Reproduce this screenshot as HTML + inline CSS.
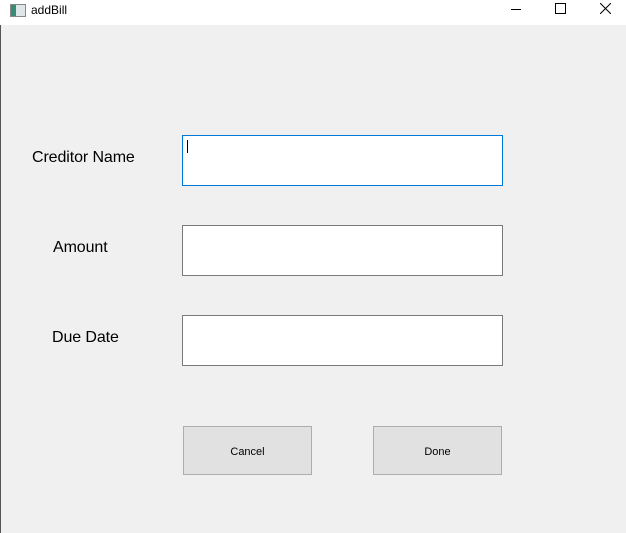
<!DOCTYPE html><html><head><style>
body{margin:0;width:626px;height:533px;background:#f0f0f0;position:relative;overflow:hidden;font-family:"Liberation Sans",sans-serif}
.t{position:absolute;left:0;top:0;width:626px;height:25px;background:#fff}
.a{position:absolute}
.in{position:absolute;left:182px;width:319px;height:49px;background:#fff;border:1px solid #7a7a7a}
.lb{position:absolute;font-size:16px;color:#000;letter-spacing:-0.1px}
.b{position:absolute;top:426px;width:127px;height:47px;background:#e1e1e1;border:1px solid #adadad;font-size:11px;display:flex;align-items:center;justify-content:center}
</style></head><body>
<div class="t"></div>
<div class="a" style="left:0;top:25px;width:1px;height:508px;background:#555"></div>
<div class="a" style="left:10px;top:4px;width:14px;height:11px;border:1px solid #888;background:linear-gradient(90deg,#3a8a78 0 5px,#dfe6ea 5px)"></div>
<div class="a" style="left:31px;top:3px;font-size:12px">addBill</div>
<div class="a" style="left:511px;top:9px;width:10px;height:1px;background:#000"></div>
<div class="a" style="left:555px;top:3px;width:9px;height:9px;border:1px solid #000"></div>
<svg class="a" style="left:600px;top:3px" width="11" height="11"><path d="M0 0L11 11M11 0L0 11" stroke="#000" stroke-width="1"/></svg>
<div class="lb" style="left:32px;top:149px">Creditor Name</div>
<div class="lb" style="left:53px;top:239px">Amount</div>
<div class="lb" style="left:52px;top:329px">Due Date</div>
<div class="in" style="top:135px;border-color:#0078d7"></div>
<div class="a" style="left:187px;top:140px;width:1px;height:13px;background:#000"></div>
<div class="in" style="top:225px"></div>
<div class="in" style="top:315px"></div>
<div class="b" style="left:183px;padding-top:2px;height:45px">Cancel</div>
<div class="b" style="left:373px;padding-top:2px;height:45px">Done</div>
</body></html>
